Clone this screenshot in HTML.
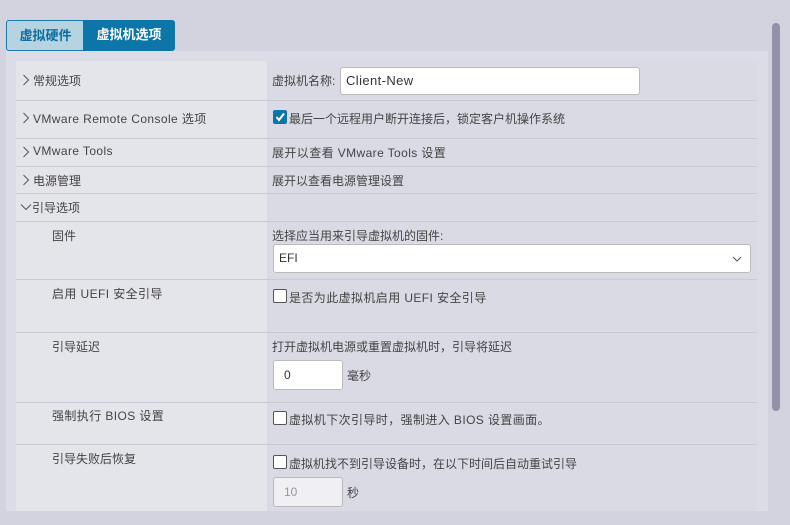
<!DOCTYPE html>
<html><head><meta charset="utf-8"><style>
*{margin:0;padding:0;box-sizing:border-box}
body{width:790px;height:525px;background:#d2d3de;font-family:"Liberation Sans","Noto Sans CJK SC",sans-serif;font-size:12px;color:#333;position:relative;overflow:hidden}
.a{position:absolute}
.tab{position:absolute;top:20px;height:31px;line-height:29px;font-weight:bold;font-size:13px;text-align:center}
.panel{left:6px;top:51px;width:762px;height:460px;background:#dcdce6}
.tbl{left:16px;top:61px;width:741px;height:450px;background:#dadae4}
.lc{left:16px;top:61px;width:251px;height:450px;background:#e4e4eb}
.hl{position:absolute;left:16px;width:741px;height:1px;background:#c9c9d3}
.t{position:absolute;white-space:nowrap;color:#444}
.l{letter-spacing:0.4px}
.inp{position:absolute;background:#fff;border:1px solid #bbb;border-radius:3px;padding-left:10px;color:#333}
.cb{position:absolute;width:14px;height:14px;border:1px solid #555;border-radius:2px;background:#fff}
svg.ch{position:absolute}
</style></head><body>
<div class="tab" style="left:6px;width:78px;background:#b6d3e2;color:#0a6d9e;border:1px solid #1a7aab;border-right:none;border-radius:3px 0 0 3px">虚拟硬件</div>
<div class="tab" style="left:83px;width:92px;background:#0c76a8;color:#fff;border-radius:0 3px 3px 0">虚拟机选项</div>
<div class="a panel"></div>
<div class="a tbl"></div>
<div class="a lc"></div>
<div class="a" style="left:772px;top:23px;width:8px;height:388px;background:#9090a6;border-radius:4px"></div>

<div class="hl" style="top:100px"></div>
<div class="hl" style="top:138px"></div>
<div class="hl" style="top:166px"></div>
<div class="hl" style="top:193px"></div>
<div class="hl" style="top:221px"></div>
<div class="hl" style="top:279px"></div>
<div class="hl" style="top:332px"></div>
<div class="hl" style="top:402px"></div>
<div class="hl" style="top:444px"></div>

<svg class="ch" style="left:22px;top:74px" width="8" height="12"><path d="M1.5 1 L6.5 6 L1.5 11" fill="none" stroke="#555" stroke-width="1"/></svg>
<svg class="ch" style="left:22px;top:112px" width="8" height="12"><path d="M1.5 1 L6.5 6 L1.5 11" fill="none" stroke="#555" stroke-width="1"/></svg>
<svg class="ch" style="left:22px;top:146px" width="8" height="12"><path d="M1.5 1 L6.5 6 L1.5 11" fill="none" stroke="#555" stroke-width="1"/></svg>
<svg class="ch" style="left:22px;top:174px" width="8" height="12"><path d="M1.5 1 L6.5 6 L1.5 11" fill="none" stroke="#555" stroke-width="1"/></svg>
<svg class="ch" style="left:20px;top:203px" width="12" height="8"><path d="M1 1.5 L6 6.5 L11 1.5" fill="none" stroke="#555" stroke-width="1"/></svg>

<div class="t" style="left:33px;top:72px">常规选项</div>
<div class="t l" style="left:33px;top:110px">VMware Remote Console 选项</div>
<div class="t l" style="left:33px;top:144px">VMware Tools</div>
<div class="t" style="left:33px;top:172px">电源管理</div>
<div class="t" style="left:32px;top:199px">引导选项</div>
<div class="t" style="left:52px;top:227px">固件</div>
<div class="t l" style="left:52px;top:285px">启用 UEFI 安全引导</div>
<div class="t" style="left:52px;top:338px">引导延迟</div>
<div class="t l" style="left:52px;top:407px">强制执行 BIOS 设置</div>
<div class="t" style="left:52px;top:450px">引导失败后恢复</div>

<div class="t" style="left:272px;top:72px">虚拟机名称:</div>
<div class="inp l" style="left:340px;top:67px;width:300px;height:28px;line-height:26px;font-size:13px;padding-left:5px">Client-New</div>
<div class="cb" style="left:273px;top:110px;background:#0c76a8;border-color:#0c76a8"><svg width="12" height="12" style="position:absolute;left:0;top:0"><path d="M2.5 6 L5 9 L10 2.5" fill="none" stroke="#fff" stroke-width="2"/></svg></div>
<div class="t" style="left:289px;top:110px">最后一个远程用户断开连接后，锁定客户机操作系统</div>
<div class="t l" style="left:272px;top:144px">展开以查看 VMware Tools 设置</div>
<div class="t" style="left:272px;top:172px">展开以查看电源管理设置</div>
<div class="t" style="left:272px;top:227px">选择应当用来引导虚拟机的固件:</div>
<div class="inp" style="left:273px;top:244px;width:478px;height:29px;line-height:27px;padding-left:5px">EFI<svg width="10" height="6" style="position:absolute;right:8px;top:11px"><path d="M1 1 L5 5 L9 1" fill="none" stroke="#555" stroke-width="1"/></svg></div>
<div class="cb" style="left:273px;top:289px"></div>
<div class="t l" style="left:289px;top:289px">是否为此虚拟机启用 UEFI 安全引导</div>
<div class="t" style="left:272px;top:338px">打开虚拟机电源或重置虚拟机时，引导将延迟</div>
<div class="inp" style="left:273px;top:360px;width:70px;height:30px;line-height:28px">0</div>
<div class="t" style="left:347px;top:367px">毫秒</div>
<div class="cb" style="left:273px;top:411px"></div>
<div class="t l" style="left:289px;top:411px">虚拟机下次引导时，强制进入 BIOS 设置画面。</div>
<div class="cb" style="left:273px;top:455px"></div>
<div class="t" style="left:289px;top:455px">虚拟机找不到引导设备时，在以下时间后自动重试引导</div>
<div class="inp" style="left:273px;top:477px;width:70px;height:30px;line-height:28px;background:#efeff4;color:#999">10</div>
<div class="t" style="left:347px;top:484px">秒</div>
</body></html>
